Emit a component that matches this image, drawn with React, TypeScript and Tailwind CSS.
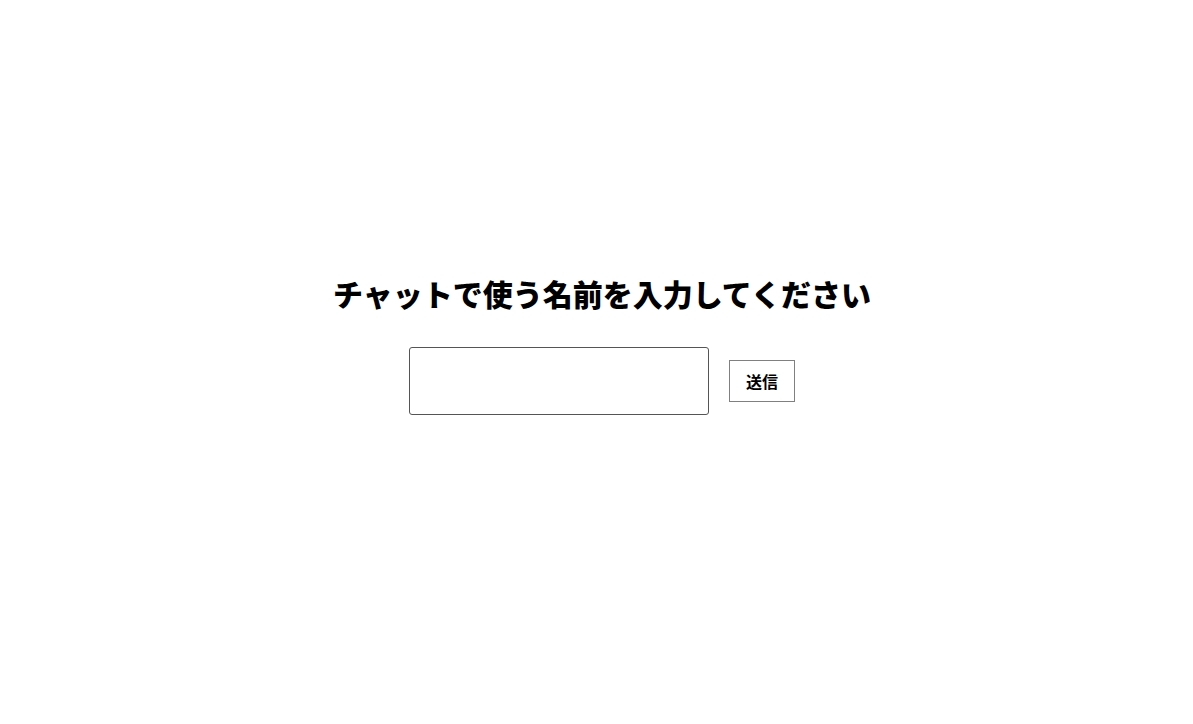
import { useState } from 'react';

export default function App() {
  const [name, setName] = useState('');

  return (
    <div
      className="min-h-screen w-full bg-white flex flex-col items-center justify-center pb-[40px] pl-[11px]"
      style={{ fontFamily: '"Noto Sans CJK JP", "Noto Sans", sans-serif' }}
    >
      <h1 className="text-[30px] leading-[48px] font-black text-black">
        チャットで使う名前を入力してください
      </h1>
      <form
        className="mt-[30px] flex items-center gap-[20px]"
        onSubmit={(e) => e.preventDefault()}
      >
        <input
          type="text"
          value={name}
          onChange={(e) => setName(e.target.value)}
          className="w-[300px] h-[68px] border border-[#555] rounded-[3px] px-2 text-base outline-none"
        />
        <button
          type="submit"
          className="w-[66px] h-[42px] border border-[#808080] bg-white text-[16px] font-bold text-black"
        >
          送信
        </button>
      </form>
    </div>
  );
}
